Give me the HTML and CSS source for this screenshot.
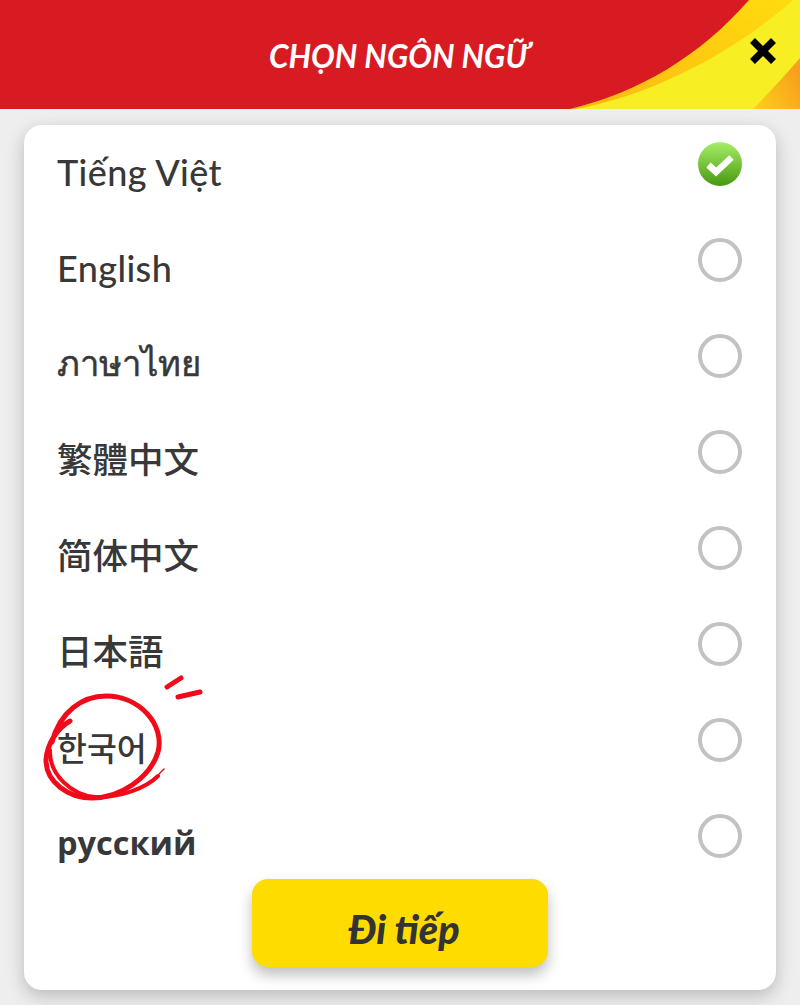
FILE: index.html
```html
<!DOCTYPE html>
<html lang="vi">
<head>
<meta charset="utf-8">
<title>Chọn ngôn ngữ</title>
<link rel="stylesheet" href="styles.css">
</head>
<body>
<header class="topbar">
  <svg class="topbar-art" viewBox="0 0 800 109" aria-hidden="true">
    <defs>
      <linearGradient id="corner" x1="0" y1="1" x2="1" y2="0.4"><stop offset="0" stop-color="#fbd21a"/><stop offset="1" stop-color="#f8a01c"/></linearGradient>
      <linearGradient id="band" x1="0" y1="1" x2="1" y2="0"><stop offset="0" stop-color="#fcb812"/><stop offset="1" stop-color="#ffdc0e"/></linearGradient>
    </defs>
    <path d="M570 109C640 92 700 56 749 0H800V109Z" fill="url(#band)"/>
    <path d="M575 109C650 96 735 52 793 0H800V109Z" fill="#f8ee24"/>
    <path d="M753 109C770 92 785 75 800 58V109Z" fill="url(#corner)"/>
  </svg>
  <h1 class="title">CHỌN NGÔN NGỮ</h1>
  <svg class="close" viewBox="0 0 28 28" aria-label="Đóng"><path d="M3.5 3.5L24.500 24.500M24.500 3.500L3.500 24.500" stroke="#000" stroke-width="7"/></svg>
</header>
<main class="card">
  <ul class="langs">
    <li class="lang"><span>Tiếng Việt</span>
      <svg class="tick" viewBox="0 0 44 44" aria-label="Đã chọn">
        <defs><linearGradient id="green" x1="0" y1="0" x2="0" y2="1"><stop offset="0" stop-color="#a8ee68"/><stop offset="1" stop-color="#47990f"/></linearGradient></defs>
        <circle cx="22" cy="22" r="22" fill="url(#green)"/>
        <path d="M10.500 23L18 30L33.500 15.500" fill="none" stroke="#fff" stroke-width="6.500"/>
      </svg></li>
    <li class="lang"><span>English</span><i class="radio"></i></li>
    <li class="lang lang-th"><span>ภาษาไทย</span><i class="radio"></i></li>
    <li class="lang cjk-tc"><span>繁體中文</span><i class="radio"></i></li>
    <li class="lang cjk-sc"><span>简体中文</span><i class="radio"></i></li>
    <li class="lang cjk-jp"><span>日本語</span><i class="radio"></i></li>
    <li class="lang cjk-kr"><span>한국어</span><i class="radio"></i></li>
    <li class="lang lang-ru"><span>русский</span><i class="radio"></i></li>
  </ul>
  <button class="next">Đi tiếp</button>
  <svg class="scribble" viewBox="24 125 752 865" aria-hidden="true">
    <g fill="none" stroke="#f00a1a" stroke-linecap="round">
      <path d="M70 721C56 729 47 745 46 760C46 782 68 798 92 798C120 798 150 778 158 752C165 725 140 696 106 696C82 696 60 712 52 742" stroke-width="5"/>
      <path d="M50 750C49 775 72 795 95 797C120 798 146 788 158 776" stroke-width="4"/>
      <path d="M155 778L164 769" stroke-width="1.500"/>
      <path d="M167 687L181 678" stroke-width="5"/>
      <path d="M178 697L200 692" stroke-width="5"/>
    </g>
  </svg>
</main>
</body>
</html>
```
FILE: styles.css
```css
* { box-sizing: border-box; }
html, body { margin: 0; height: 100%; }
body {
  background: #eeeeee;
  font-family: "Lato", "Noto Sans", sans-serif;
  color: #333;
  overflow: hidden;
}
.topbar {
  position: relative;
  height: 109px;
  background: #d81b23;
  display: flex;
  align-items: center;
  justify-content: center;
}
.topbar-art { position: absolute; inset: 0; width: 100%; height: 100%; }
.title {
  position: relative;
  margin: 2px 0 0;
  font-family: "Lato", sans-serif;
  font-size: 31.500px;
  font-style: italic;
  font-weight: 700;
  color: #fff;
}
.close {
  position: absolute;
  left: 749px;
  top: 37px;
  width: 28px;
  height: 28px;
}
.card {
  position: relative;
  margin: 16px 24px 0;
  height: 865px;
  background: #fff;
  border-radius: 18px;
  box-shadow: 0 6px 18px rgba(0, 0, 0, .22);
}
.langs { list-style: none; margin: 0; padding: 0; }
.lang {
  height: 96px;
  padding: 0 34px 0 33px;
  display: flex;
  align-items: center;
  justify-content: space-between;
  font-size: 36px;
  font-weight: 500;
  letter-spacing: .4px;
  color: #383838;
}
.lang span { line-height: 1; margin-bottom: 3px; }
.lang-th { font-size: 34.600px; letter-spacing: 0; -webkit-text-stroke: .5px #383838; }
.cjk-tc, .cjk-sc, .cjk-jp { font-size: 35.500px; letter-spacing: 0; }
.cjk-tc span, .cjk-sc span, .cjk-jp span { margin-bottom: 7px; }
.cjk-tc { font-family: "Noto Sans CJK TC", sans-serif; }
.cjk-sc { font-family: "Noto Sans CJK SC", sans-serif; }
.cjk-jp { font-family: "Noto Sans CJK JP", sans-serif; }
.cjk-kr { font-family: "Noto Sans CJK KR", sans-serif; font-size: 32.500px; letter-spacing: 0; }
.cjk-kr span { margin-bottom: 3px; }
.lang-ru { font-family: "Open Sans", sans-serif; font-size: 32.500px; font-weight: 700; letter-spacing: 0; }
.radio {
  width: 44px;
  height: 44px;
  margin-bottom: 18px;
  border: 4px solid #c2c2c2;
  border-radius: 50%;
}
.tick { width: 44px; height: 44px; margin-bottom: 18px; }
.next {
  display: block;
  width: 296px;
  height: 88px;
  margin: -14px auto 0;
  padding: 10px 0 0 8px;
  position: relative;
  background: #ffdc00;
  border: 0;
  border-radius: 16px;
  box-shadow: 0 8px 14px rgba(0, 0, 0, .25);
  font-family: "Lato", sans-serif;
  font-size: 39.500px;
  font-style: italic;
  font-weight: 900;
  color: #333;
}
.scribble {
  position: absolute;
  inset: 0;
  width: 100%;
  height: 100%;
  pointer-events: none;
}
```
